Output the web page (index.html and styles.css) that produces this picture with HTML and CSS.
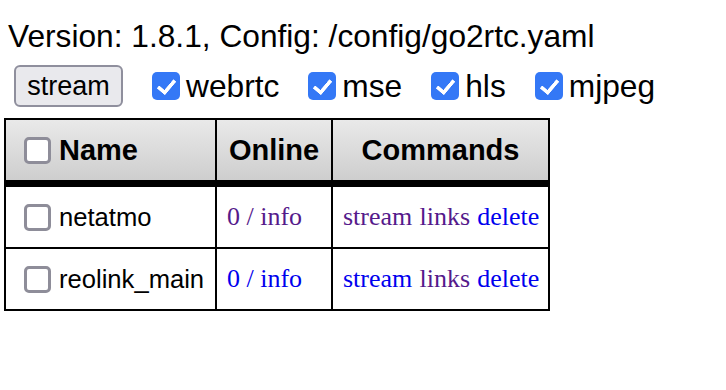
FILE: index.html
```html
<!DOCTYPE html>
<html lang="en">
<head>
    <meta charset="UTF-8">
    <meta name="viewport" content="width=device-width, initial-scale=1.0">
    <title>go2rtc</title>
    <link rel="stylesheet" href="styles.css">
</head>
<body>
    <div class="info">Version: 1.8.1, Config: /config/go2rtc.yaml</div>

    <div class="controls">
        <button class="btn">stream</button>
        <label class="mode"><input type="checkbox" class="check" checked>webrtc</label>
        <label class="mode"><input type="checkbox" class="check" checked>mse</label>
        <label class="mode"><input type="checkbox" class="check" checked>hls</label>
        <label class="mode"><input type="checkbox" class="check" checked>mjpeg</label>
    </div>

    <table class="streams">
        <thead>
            <tr>
                <th class="col-name"><label class="name"><input type="checkbox" class="check">Name</label></th>
                <th class="col-online">Online</th>
                <th class="col-commands">Commands</th>
            </tr>
        </thead>
        <tbody>
            <tr>
                <td><label class="name"><input type="checkbox" class="check">netatmo</label></td>
                <td><a href="#" class="visited">0 / info</a></td>
                <td><a href="#" class="visited">stream</a> <a href="#" class="visited">links</a> <a href="#">delete</a></td>
            </tr>
            <tr>
                <td><label class="name"><input type="checkbox" class="check">reolink_main</label></td>
                <td><a href="#">0 / info</a></td>
                <td><a href="#">stream</a> <a href="#" class="visited">links</a> <a href="#">delete</a></td>
            </tr>
        </tbody>
    </table>
</body>
</html>
```

FILE: styles.css
```css
* {
    box-sizing: border-box;
}
body {
    margin: 0;
    padding: 18px 0 0 4px;
    font-family: "Liberation Sans", Arial, sans-serif;
    color: #000;
    background-color: #fff;
}
.info {
    margin-left: 4px;
    font-size: 31.7px;
    line-height: 37px;
}
.controls {
    display: flex;
    align-items: center;
    gap: 29px;
    margin: 10px 0 0 10px;
    height: 42px;
    font-size: 31.7px;
}
.btn {
    height: 42px;
    width: 109px;
    padding: 0;
    font-family: "Liberation Sans", Arial, sans-serif;
    font-size: 27px;
    color: #000;
    background-color: #e9e9ed;
    border: 2px solid #8f8f9d;
    border-radius: 6px;
}
.mode {
    display: flex;
    align-items: center;
    gap: 6px;
}
.check {
    appearance: none;
    -webkit-appearance: none;
    position: relative;
    margin: 0;
    width: 27px;
    height: 27px;
    background-color: #fff;
    border: 3px solid #8e8d99;
    border-radius: 5px;
}
.check:checked {
    width: 28px;
    height: 28px;
    background-color: #3478f6;
    border: none;
}
.check:checked::after {
    content: "";
    position: absolute;
    left: 9px;
    top: 4px;
    width: 7px;
    height: 14px;
    border: solid #fff;
    border-width: 0 4px 4px 0;
    border-radius: 1px;
    transform: rotate(40deg);
}
.streams {
    margin-top: 11px;
    width: 546px;
    table-layout: fixed;
    border-spacing: 0;
    border: 2px solid #000;
}
.streams th,
.streams td {
    padding: 0 10px;
    border-left: 2px solid #000;
    white-space: nowrap;
}
.streams th:first-child,
.streams td:first-child {
    border-left: none;
}
.streams th {
    height: 67px;
    font-size: 29px;
    font-weight: bold;
    background: linear-gradient(#e9e9e9, #cecece);
    border-bottom: 7px solid #000;
}
.streams tbody tr + tr td {
    border-top: 2px solid #000;
}
.streams td {
    height: 60px;
    font-size: 25.6px;
}
.streams tbody tr + tr td {
    height: 62px;
}
.col-name {
    width: 209px;
    text-align: left;
}
.col-online {
    width: 116px;
}
.col-commands {
    width: 217px;
}
.name {
    display: flex;
    align-items: center;
    gap: 8px;
}
.name .check {
    margin-left: 8px;
}
.streams a {
    font-family: "Liberation Serif", "Times New Roman", serif;
    font-size: 26px;
    color: #0000ee;
    text-decoration: none;
}
.streams a.visited {
    color: #551a8b;
}
```
